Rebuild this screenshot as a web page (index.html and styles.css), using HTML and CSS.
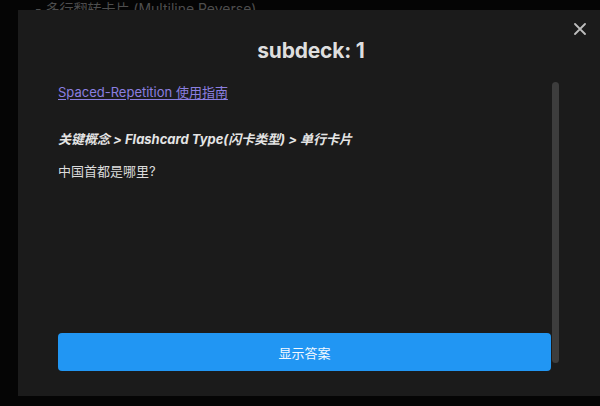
FILE: index.html
```html
<!DOCTYPE html>
<html>
<head>
<meta charset="utf-8">
<link rel="stylesheet" href="styles.css">
</head>
<body>
<div class="page">
  <div class="bg-line">- 多行翻转卡片 (Multiline Reverse)</div>
</div>
<div class="modal">
  <button class="close" aria-label="close">
    <svg width="12" height="12" viewBox="0 0 12 12"><path d="M1 1L11 11M11 1L1 11" stroke="#bdbdbd" stroke-width="1.8" stroke-linecap="round"/></svg>
  </button>
  <h1 class="title">subdeck: 1</h1>
  <div class="body">
    <div class="content">
      <a class="link" href="#">Spaced-Repetition 使用指南</a>
      <div class="crumb">关键概念 &gt; Flashcard Type(闪卡类型) &gt; 单行卡片</div>
      <div class="question">中国首都是哪里?</div>
      <div class="spacer"></div>
      <button class="show">显示答案</button>
    </div>
    <div class="scrollbar"><div class="thumb"></div></div>
  </div>
</div>
</body>
</html>
```
FILE: styles.css
```css
html, body {
  margin: 0;
  padding: 0;
  background: #050505;
  width: 600px;
  height: 406px;
  overflow: hidden;
  font-family: Inter, "Noto Sans CJK SC", sans-serif;
}
.page {
  padding: 0 0 0 35px;
}
.bg-line {
  color: #4e4e4e;
  font-size: 14px;
  line-height: 20px;
  margin-top: -1px;
}
.modal {
  position: absolute;
  left: 18px;
  top: 10px;
  width: 582px;
  height: 386px;
  background: #1b1b1b;
  box-sizing: border-box;
  padding: 0 0 0 40px;
  display: flex;
  flex-direction: column;
}
.close {
  position: absolute;
  left: 550px;
  top: 7px;
  width: 24px;
  height: 24px;
  border: 0;
  padding: 0;
  background: transparent;
  display: flex;
  align-items: center;
  justify-content: center;
}
.title {
  margin: 26px 0 0 0;
  width: 506px;
  text-align: center;
  font-size: 21px;
  font-weight: 700;
  line-height: 30px;
  color: #dedede;
  letter-spacing: -0.2px;
}
.body {
  display: flex;
  margin-top: 10px;
  height: 300px;
}
.content {
  width: 493px;
  display: flex;
  flex-direction: column;
}
.link {
  font-size: 13px;
  line-height: 20px;
  margin-top: 6px;
  color: #8b7fe0;
  text-decoration: underline;
  text-underline-offset: 2px;
  align-self: flex-start;
}
.crumb {
  margin-top: 27px;
  font-size: 13px;
  line-height: 20px;
  font-weight: 700;
  font-style: italic;
  color: #e4e4e4;
}
.question {
  margin-top: 12px;
  font-size: 13px;
  line-height: 20px;
  color: #dcdcdc;
}
.spacer {
  flex: 1;
}
.show {
  height: 38px;
  border: 0;
  border-radius: 4px;
  background: #2196f3;
  color: #f4f9ff;
  font-family: Inter, "Noto Sans CJK SC", sans-serif;
  font-size: 13px;
  margin-bottom: 5px;
}
.scrollbar {
  width: 7px;
  margin-left: 1px;
  padding-top: 6px;
}
.thumb {
  width: 7px;
  height: 281px;
  border-radius: 4px;
  background: #3d3d3d;
}
```
